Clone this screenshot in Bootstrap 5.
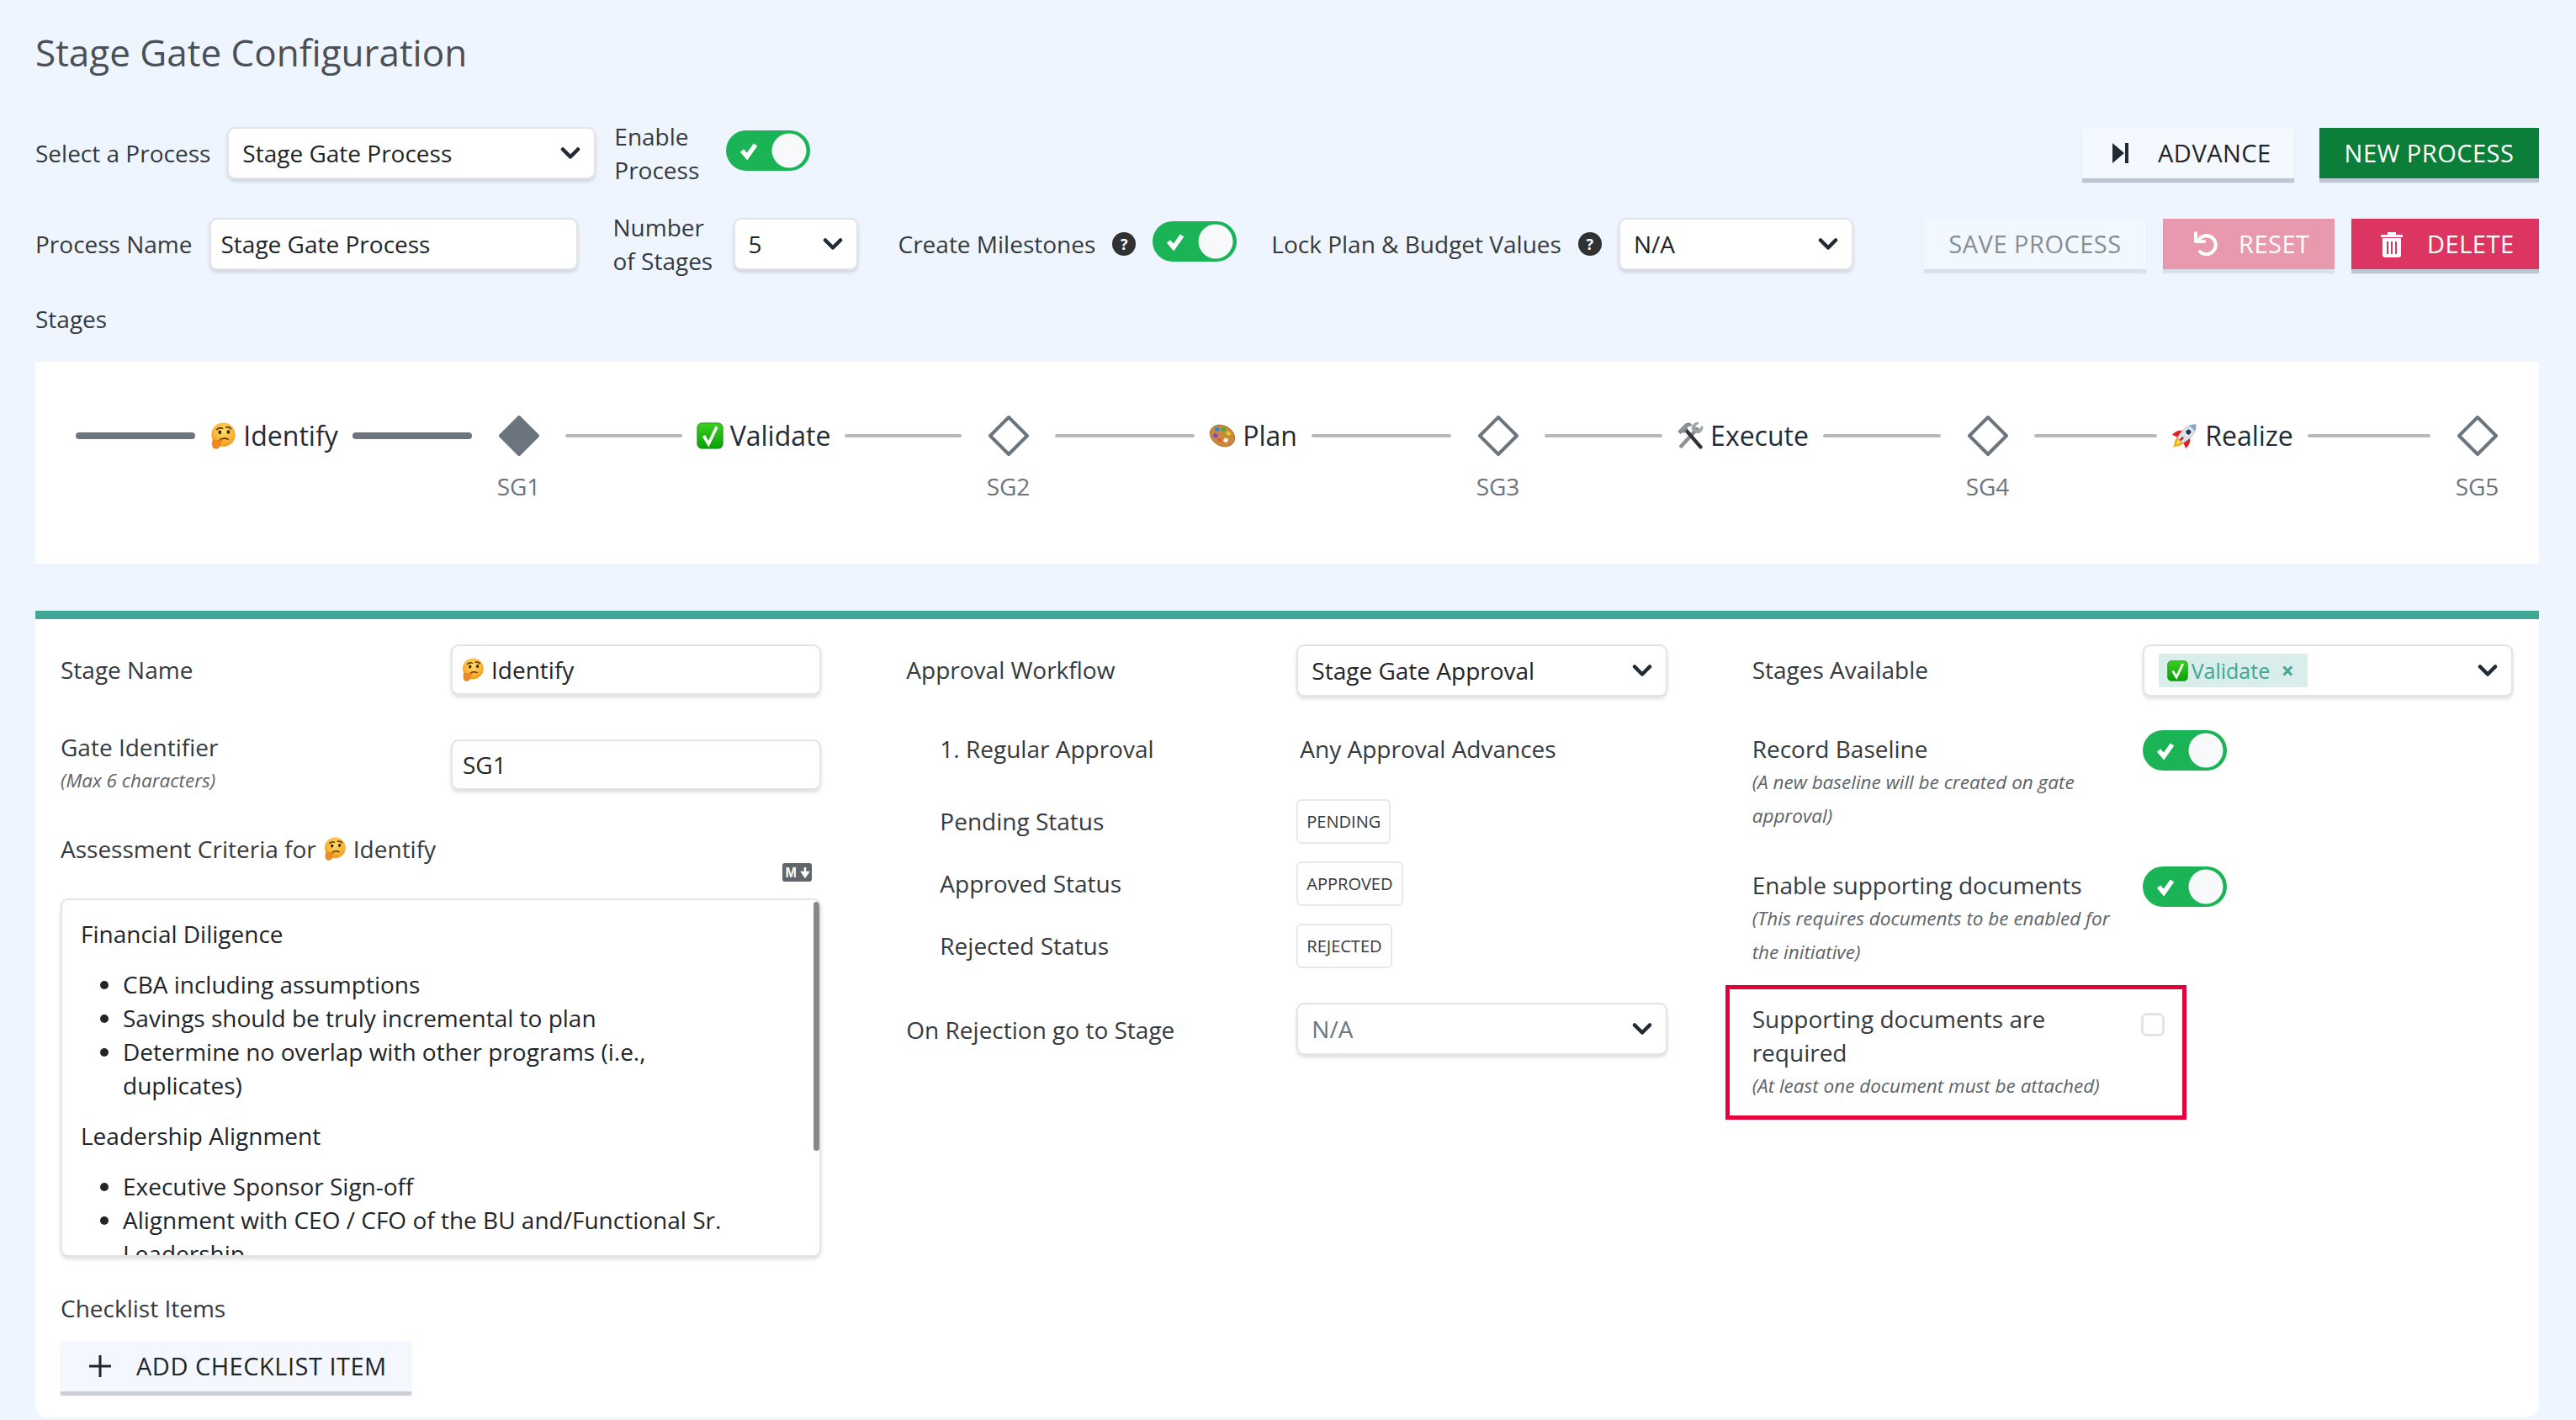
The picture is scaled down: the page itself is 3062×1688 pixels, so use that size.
<!doctype html>
<html lang="en">
<head>
<meta charset="utf-8">
<title>Stage Gate Configuration</title>
<link href="https://cdn.jsdelivr.net/npm/bootstrap@5.3.0/dist/css/bootstrap.min.css" rel="stylesheet">
<style>
  body { background: #eef5ff; font-family: "Open Sans", sans-serif; font-size: 28px; line-height: 40px; color: #343a40; padding: 0 44px 0 42px; }
  .page-title { font-size: 44px; line-height: 64px; font-weight: 400; color: #495057; margin: 0; padding-top: 30px; }
  .top-row { height: 63px; margin-top: 56px; }
  .top-row + .top-row { margin-top: 45px; }
  .wrap-label { line-height: 40px; flex: none; }
  .lbl-enable { width: 133px; margin-left: 22px; }
  .lbl-number { width: 143px; margin-left: 42px; }
  .w-sel1 { width: 438px; flex: none; }
  .w-sel2 { width: 148px; flex: none; }
  .w-sel3 { width: 279px; flex: none; }
  .top-row .tog { margin-bottom: 6px; }
  .lbl-milestone { margin-left: 48px; }
  .lbl-lock { margin-left: 41px; }
  .help-gap { margin: 0 20px; }

  .form-control, .form-select {
    font-size: 28px; line-height: 40px; height: 60px; padding: 8px 16px; color: #212529;
    border: 2px solid #e2e4e7; border-radius: 9px; box-shadow: 0 3px 4px rgba(0, 0, 0, .13);
    font-family: "Open Sans", sans-serif;
  }
  .form-select {
    height: 62px;
    background-image: url("data:image/svg+xml,%3csvg xmlns='http://www.w3.org/2000/svg' viewBox='0 0 16 16'%3e%3cpath fill='none' stroke='%23212b36' stroke-width='3' stroke-linecap='round' stroke-linejoin='round' d='M2 5l6 6 6-6'/%3e%3c/svg%3e");
    background-size: 24px 24px; background-position: right 16px center; padding-right: 48px;
  }
  .w-inp1 { width: 438px; flex: none; height: 62px; padding-left: 12px; }
  .val-muted { color: #6c757d; }
  .emoji-inline { width: 28px; height: 28px; flex: none; }

  .form-check-input.tog {
    width: 100px; height: 48px; margin-top: 0; margin-left: 0; border: 0; border-radius: 24px; flex: none; float: none;
    background-color: #1ab355; background-size: 100px 48px; background-position: 0 0;
    background-image: url("data:image/svg+xml,%3csvg xmlns='http://www.w3.org/2000/svg' viewBox='0 0 100 48'%3e%3ccircle cx='75' cy='24' r='20.5' fill='%23f8f9fa'/%3e%3cpath fill='none' stroke='%23fff' stroke-width='5.5' d='M19 24l6 7 10-14'/%3e%3c/svg%3e");
  }
  .help-dot { width: 28px; height: 28px; border-radius: 50%; background: #2f3133; color: #fff; font-size: 18px; line-height: 28px; font-weight: 700; text-align: center; flex: none; }

  .act-btn { height: 60px; border: 0; border-radius: 0; font-size: 29px; line-height: 40px; padding: 0; box-shadow: 0 5px 1px rgba(60, 70, 90, .27); letter-spacing: .5px; white-space: nowrap; }
  .act-ico { padding-left: 34px; }
  .ico-slot { width: 56px; flex: none; display: flex; }
  .act-light { background: #f4f8ff; color: #212529; }
  .act-green, .act-green:hover { background: #0b7f39; color: #fff; }
  .act-save, .act-save:disabled { background: #f2f8ff; color: #868e96; box-shadow: 0 5px 1px rgba(60, 70, 90, .12); opacity: 1; }
  .act-reset { background: #e899ae; color: #fff; box-shadow: 0 5px 1px rgba(60, 70, 90, .12); }
  .act-del { background: #dc3562; color: #fff; }
  .btn-advance { width: 252px; }
  .btn-new { width: 261px; }
  .btn-savep { width: 264px; }
  .btn-reset { width: 204px; }
  .btn-del { width: 223px; }
  .gap-top { gap: 30px; }
  .gap-low { gap: 20px; }

  .stages-lbl { margin: 38px 0 0; line-height: 40px; }
  .stage-panel { background: #fff; margin-top: 31px; height: 240px; padding: 63px 17px 0 48px; }
  .step-item { width: 582px; flex: none; }
  .step-seg { height: 50px; flex: 1; min-width: 0; }
  .step-line { height: 4px; background: #b8b8b8; border-radius: 2px; flex: 1; }
  .step-line.on { height: 8px; background: #6c757d; border-radius: 4px; }
  .step-name { font-size: 32px; line-height: 50px; margin: 0 17px; color: #212b36; white-space: nowrap; }
  .step-name svg { width: 32px; height: 32px; flex: none; }
  .step-gate { width: 111px; flex: none; color: #6c757d; font-size: 28px; line-height: 40px; }
  .gate-mark { width: 50px; height: 50px; display: block; margin-bottom: 15px; }

  .cfg-card { background: #fff; margin-top: 56px; border-top: 10px solid #3fa796; border-radius: 0 0 14px 14px; padding: 30px 31px 0 30px; height: 959px; }
  .cfg-cols { --bs-gutter-x: 101px; }
  .fld { display: grid; grid-template-columns: 464px 1fr; }
  .fld-label { padding-top: 10px; }
  .hint { font-size: 22.5px; line-height: 40px; font-style: italic; color: #5c636a; }
  .gate-row { margin-top: 42px; }
  .gate-input { margin-top: 11px; padding-left: 12px; }
  .stage-name-val { padding-left: 10px; padding-right: 10px; }
  .assess-row { margin-top: 41px; }
  .md-row { height: 22px; margin-top: -3px; padding-right: 11px; }
  .crit-box { height: 426px; margin-top: 20px; padding: 20px 90px 0 22px; overflow: hidden; border: 2px solid #e2e4e7; border-radius: 9px; box-shadow: 0 3px 4px rgba(0, 0, 0, .13); position: relative; background: #fff; color: #212529; }
  .crit-box p { margin: 0 0 20px; }
  .crit-box ul { margin: 0 0 20px; padding-left: 50px; }
  .crit-thumb { position: absolute; top: 2px; right: 0; width: 7px; height: 296px; background: #85888c; border-radius: 4px; }
  .check-lbl { margin-top: 41px; }
  .btn-add { width: 417px; margin-top: 19px; background: #f4f7fd; color: #212529; }

  .sub-lbl { padding-left: 40px; }
  .reg-row { margin-top: 42px; }
  .status-first { margin-top: 29px; }
  .status-pill { display: inline-block; font-size: 20px; line-height: 49px; padding: 0 10px; border: 2px solid #e6e8ec; border-radius: 6px; background: #fff; color: #343a40; height: 53px; }
  .status-line { height: 74px; }
  .reject-row { margin-top: 31px; }
  .reject-row .fld-label { padding-top: 12px; }
  .stage-tag { background: #d9eeea; color: #3fa796; height: 40px; width: 177px; padding: 0 10px; border-radius: 2px; font-size: 25px; line-height: 40px; }
  .stage-tag svg { width: 25px; height: 25px; flex: none; }
  .tag-x { color: #3fa796; font-weight: 700; font-size: 26px; margin-left: auto; padding-right: 6px; }
  .sel-multi { padding: 9px 48px 9px 17px; }
  .opt-row { margin-top: 42px; }
  .tog-up { margin-top: -2px; }

  .req-box { border: 5px solid #e4003a; width: 548px; height: 160px; margin: 19px 0 0 -32px; padding: 15px 0 0 27px; }
  .req-text { width: 462px; flex: none; }
  .req-check { width: 28px; height: 28px; border: 3px solid #e2e4e7; border-radius: 5px; margin: 13px 0 0 0; padding: 0; float: none; flex: none; }
</style>
</head>
<body>

<!-- shared emoji -->
<svg class="position-absolute" width="0" height="0" aria-hidden="true">
  <defs>
    <radialGradient id="faceFill" cx="50%" cy="35%" r="65%">
      <stop offset="0" stop-color="#ffe066"/><stop offset="1" stop-color="#f49b1c"/>
    </radialGradient>
    <linearGradient id="checkFill" x1="0" y1="0" x2="0" y2="1">
      <stop offset="0" stop-color="#3ccf1e"/><stop offset="1" stop-color="#0aa00a"/>
    </linearGradient>
    <symbol id="em-think" viewBox="2 0 33 35">
      <circle cx="19" cy="16" r="15.500" fill="url(#faceFill)"/>
      <path d="M10.500 9.500c2-2.200 5-2.700 7.500-1.500M22.500 6.500c2.500-.8 5 0 6.500 2" fill="none" stroke="#5a3410" stroke-width="1.800" stroke-linecap="round"/>
      <ellipse cx="14.500" cy="13" rx="2" ry="2.500" fill="#3b2408"/>
      <ellipse cx="25.500" cy="12.500" rx="2" ry="2.500" fill="#3b2408"/>
      <path d="M15 22.500c3-1.800 7-1.800 10-.5" fill="none" stroke="#5a3410" stroke-width="1.800" stroke-linecap="round"/>
      <path d="M5 24c2-2 4-1 5.500 0l6-1.500c1.500 0 1.500 2 .2 2.500l-2.700 1c1.500 1 1 5.500-1 7-2 1.500-5.500 1.500-7 0-1.500-2-1.500-6-1-9z" fill="#f08a1d" stroke="#c96a10" stroke-width=".6"/>
    </symbol>
    <symbol id="em-check" viewBox="0 0 36 36">
      <rect x="1" y="1" width="34" height="34" rx="6" fill="url(#checkFill)" stroke="#0a8a0a" stroke-width="1"/>
      <path d="M9.500 18l6.500 11 11-23" fill="none" stroke="#fff" stroke-width="4"/>
    </symbol>
    <symbol id="em-palette" viewBox="0 0 36 36">
      <g transform="rotate(30 18 18)">
        <ellipse cx="18" cy="18" rx="17.500" ry="13.500" fill="#c98a3c" stroke="#9a6424" stroke-width=".8"/>
        <circle cx="25" cy="21" r="3" fill="#f4efe6"/>
        <ellipse cx="7.500" cy="14" rx="3.200" ry="2.600" fill="#2f86dd"/>
        <ellipse cx="15" cy="10" rx="3.200" ry="2.500" fill="#3cb04a"/>
        <ellipse cx="23.500" cy="11" rx="3.200" ry="2.500" fill="#eec81e"/>
        <ellipse cx="10" cy="22.500" rx="3.200" ry="2.800" fill="#8a3fc4"/>
        <ellipse cx="18" cy="25" rx="2.800" ry="2.300" fill="#e9572b"/>
      </g>
    </symbol>
    <symbol id="em-tools" viewBox="0 0 36 36">
      <path d="M27 9L6 32" stroke="#8d9298" stroke-width="5" stroke-linecap="round"/>
      <path d="M34.500 5l-5 5-4-1-1-4 5-4.500C25 0 20 3 20.500 8c.3 4 5 7 9 6 3.500-1 6-5 5-9z" fill="#a4a9ae" stroke="#6e7378" stroke-width=".7"/>
      <path d="M12 10l20 23" stroke="#2f3237" stroke-width="5" stroke-linecap="round"/>
      <path d="M2 12L12 2c3-1.500 6-1 8 1l-1.500 2-2-.5-3.500 3.500.5 2.500-3.500 3.500-2.500-1-2.500 2.500z" fill="#8b9096" stroke="#5d6166" stroke-width=".7"/>
    </symbol>
    <symbol id="em-rocket" viewBox="0 0 36 36">
      <g transform="rotate(45 18 18)">
        <path d="M12 26c0 6 4 9 6 14 2-5 6-8 6-14z" fill="#f9a11b"/>
        <path d="M15 27c0 3 2 5 3 9 1-4 3-6 3-9z" fill="#ffe04a"/>
        <path d="M12 15c-4 2-7 6-7 14l8-3zM24 15c4 2 7 6 7 14l-8-3z" fill="#e02020"/>
        <path d="M18-3c6 5 7.500 12 7 20-.2 4-1 7-2 10H13c-1-3-1.800-6-2-10-.5-8 1-15 7-20z" fill="#dbe2ea" stroke="#8e9db0" stroke-width=".6"/>
        <path d="M18-3c2.500 2 4 4.500 5 7H13c1-2.500 2.500-5 5-7z" fill="#86a6d2"/>
        <circle cx="18" cy="11" r="4" fill="#1f3554" stroke="#eef2f6" stroke-width="1.400"/>
        <path d="M18 21v6" stroke="#d02020" stroke-width="3"/>
      </g>
    </symbol>
  </defs>
</svg>

<h1 class="page-title">Stage Gate Configuration</h1>

<div class="d-flex align-items-center top-row">
  <label class="me-3 pe-1">Select a Process</label>
  <select class="form-select w-sel1"><option>Stage Gate Process</option></select>
  <span class="wrap-label lbl-enable">Enable<br>Process</span>
  <input class="form-check-input tog" type="checkbox" role="switch" checked>
  <div class="d-flex gap-top ms-auto">
    <button class="btn act-btn act-ico act-light btn-advance d-flex align-items-center">
      <span class="ico-slot"><svg width="24" height="26" viewBox="0 0 24 26"><path d="M2 1l14 12L2 25z" fill="#212b36"/><rect x="17" y="1" width="4" height="24" fill="#212b36"/></svg></span>
      ADVANCE
    </button>
    <button class="btn act-btn act-green btn-new">NEW PROCESS</button>
  </div>
</div>

<div class="d-flex align-items-center top-row">
  <label class="me-3 pe-1">Process Name</label>
  <input class="form-control w-inp1" value="Stage Gate Process">
  <span class="wrap-label lbl-number">Number<br>of Stages</span>
  <select class="form-select w-sel2"><option>5</option></select>
  <span class="lbl-milestone text-nowrap">Create Milestones</span>
  <span class="help-dot help-gap">?</span>
  <input class="form-check-input tog" type="checkbox" role="switch" checked>
  <span class="lbl-lock text-nowrap">Lock Plan &amp; Budget Values</span>
  <span class="help-dot help-gap">?</span>
  <select class="form-select w-sel3"><option>N/A</option></select>
  <div class="d-flex gap-low ms-auto">
    <button class="btn act-btn act-save btn-savep" disabled>SAVE PROCESS</button>
    <button class="btn act-btn act-ico act-reset btn-reset d-flex align-items-center">
      <span class="ico-slot"><svg width="32" height="32" viewBox="0 0 32 32"><path d="M8 12a11 11 0 1 1 2 13" fill="none" stroke="#fff" stroke-width="4" stroke-linecap="round"/><path d="M5 3v10h10" fill="none" stroke="#fff" stroke-width="4" stroke-linecap="round" stroke-linejoin="round"/></svg></span>
      RESET
    </button>
    <button class="btn act-btn act-ico act-del btn-del d-flex align-items-center">
      <span class="ico-slot"><svg width="28" height="32" viewBox="0 0 28 32"><path d="M1 5h26v3H1zM9 2h10v3H9z" fill="#fff"/><path d="M3 9h22v20c0 2-1 3-3 3H6c-2 0-3-1-3-3z" fill="#fff"/><path d="M9 13v15M14 13v15M19 13v15" stroke="#dc3562" stroke-width="2"/></svg></span>
      DELETE
    </button>
  </div>
</div>

<p class="stages-lbl">Stages</p>

<div class="stage-panel d-flex">
  <div class="step-item d-flex align-items-start">
    <div class="step-seg d-flex align-items-center">
      <span class="step-line on"></span>
      <span class="step-name d-flex align-items-center gap-2"><svg><use href="#em-think"/></svg>Identify</span>
      <span class="step-line on"></span>
    </div>
    <div class="step-gate d-flex flex-column align-items-center">
      <svg class="gate-mark" viewBox="0 0 50 50"><path d="M25 3L47 25 25 47 3 25z" fill="#6c757d" stroke="#6c757d" stroke-width="4" stroke-linejoin="round"/></svg>
      SG1
    </div>
  </div>
  <div class="step-item d-flex align-items-start">
    <div class="step-seg d-flex align-items-center">
      <span class="step-line"></span>
      <span class="step-name d-flex align-items-center gap-2"><svg><use href="#em-check"/></svg>Validate</span>
      <span class="step-line"></span>
    </div>
    <div class="step-gate d-flex flex-column align-items-center">
      <svg class="gate-mark" viewBox="0 0 50 50"><path d="M25 3L47 25 25 47 3 25z" fill="#fff" stroke="#6c757d" stroke-width="4" stroke-linejoin="round"/></svg>
      SG2
    </div>
  </div>
  <div class="step-item d-flex align-items-start">
    <div class="step-seg d-flex align-items-center">
      <span class="step-line"></span>
      <span class="step-name d-flex align-items-center gap-2"><svg><use href="#em-palette"/></svg>Plan</span>
      <span class="step-line"></span>
    </div>
    <div class="step-gate d-flex flex-column align-items-center">
      <svg class="gate-mark" viewBox="0 0 50 50"><path d="M25 3L47 25 25 47 3 25z" fill="#fff" stroke="#6c757d" stroke-width="4" stroke-linejoin="round"/></svg>
      SG3
    </div>
  </div>
  <div class="step-item d-flex align-items-start">
    <div class="step-seg d-flex align-items-center">
      <span class="step-line"></span>
      <span class="step-name d-flex align-items-center gap-2"><svg><use href="#em-tools"/></svg>Execute</span>
      <span class="step-line"></span>
    </div>
    <div class="step-gate d-flex flex-column align-items-center">
      <svg class="gate-mark" viewBox="0 0 50 50"><path d="M25 3L47 25 25 47 3 25z" fill="#fff" stroke="#6c757d" stroke-width="4" stroke-linejoin="round"/></svg>
      SG4
    </div>
  </div>
  <div class="step-item d-flex align-items-start">
    <div class="step-seg d-flex align-items-center">
      <span class="step-line"></span>
      <span class="step-name d-flex align-items-center gap-2"><svg><use href="#em-rocket"/></svg>Realize</span>
      <span class="step-line"></span>
    </div>
    <div class="step-gate d-flex flex-column align-items-center">
      <svg class="gate-mark" viewBox="0 0 50 50"><path d="M25 3L47 25 25 47 3 25z" fill="#fff" stroke="#6c757d" stroke-width="4" stroke-linejoin="round"/></svg>
      SG5
    </div>
  </div>
</div>

<div class="cfg-card">
  <div class="row cfg-cols">
    <!-- left column -->
    <div class="col-4">
      <div class="fld">
        <div class="fld-label">Stage Name</div>
        <div class="form-control stage-name-val d-flex align-items-center gap-2"><svg class="emoji-inline"><use href="#em-think"/></svg>Identify</div>
      </div>
      <div class="fld gate-row">
        <div>
          <div>Gate Identifier</div>
          <div class="hint">(Max 6 characters)</div>
        </div>
        <input class="form-control gate-input" value="SG1">
      </div>
      <div class="d-flex align-items-center gap-2 assess-row">Assessment Criteria for <svg class="emoji-inline"><use href="#em-think"/></svg> Identify</div>
      <div class="d-flex justify-content-end md-row">
        <svg width="35" height="22" viewBox="0 0 35 22"><rect width="35" height="22" rx="3" fill="#60656b"/><text x="3.500" y="17" font-family="Liberation Sans, sans-serif" font-size="16" font-weight="700" fill="#fff">M</text><path d="M27 5v7M23.500 11l3.500 5 3.500-5z" stroke="#fff" stroke-width="2.500" fill="#fff"/></svg>
      </div>
      <div class="crit-box">
        <span class="crit-thumb"></span>
        <p>Financial Diligence</p>
        <ul>
          <li>CBA including assumptions</li>
          <li>Savings should be truly incremental to plan</li>
          <li>Determine no overlap with other programs (i.e., duplicates)</li>
        </ul>
        <p>Leadership Alignment</p>
        <ul>
          <li>Executive Sponsor Sign-off</li>
          <li>Alignment with CEO / CFO of the BU and/Functional Sr. Leadership</li>
        </ul>
      </div>
      <div class="check-lbl">Checklist Items</div>
      <button class="btn act-btn act-ico btn-add d-flex align-items-center">
        <span class="ico-slot"><svg width="26" height="26" viewBox="0 0 26 26"><path d="M13 0v26M0 13h26" stroke="#212529" stroke-width="3"/></svg></span>
        ADD CHECKLIST ITEM
      </button>
    </div>

    <!-- middle column -->
    <div class="col-4">
      <div class="fld">
        <div class="fld-label">Approval Workflow</div>
        <select class="form-select"><option>Stage Gate Approval</option></select>
      </div>
      <div class="fld reg-row">
        <div class="sub-lbl">1. Regular Approval</div>
        <div class="ps-1">Any Approval Advances</div>
      </div>
      <div class="fld status-line status-first align-items-center">
        <div class="sub-lbl">Pending Status</div>
        <div><span class="status-pill">PENDING</span></div>
      </div>
      <div class="fld status-line align-items-center">
        <div class="sub-lbl">Approved Status</div>
        <div><span class="status-pill">APPROVED</span></div>
      </div>
      <div class="fld status-line align-items-center">
        <div class="sub-lbl">Rejected Status</div>
        <div><span class="status-pill">REJECTED</span></div>
      </div>
      <div class="fld reject-row">
        <div class="fld-label">On Rejection go to Stage</div>
        <select class="form-select val-muted"><option>N/A</option></select>
      </div>
    </div>

    <!-- right column -->
    <div class="col-4">
      <div class="fld">
        <div class="fld-label">Stages Available</div>
        <div class="form-select d-flex align-items-center sel-multi">
          <span class="stage-tag d-flex align-items-center gap-1"><svg><use href="#em-check"/></svg>Validate<span class="tag-x">×</span></span>
        </div>
      </div>
      <div class="fld opt-row">
        <div>
          <div>Record Baseline</div>
          <div class="hint pe-4">(A new baseline will be created on gate approval)</div>
        </div>
        <div class="tog-up"><input class="form-check-input tog" type="checkbox" role="switch" checked></div>
      </div>
      <div class="fld opt-row">
        <div>
          <div>Enable supporting documents</div>
          <div class="hint pe-4">(This requires documents to be enabled for the initiative)</div>
        </div>
        <div class="tog-up"><input class="form-check-input tog" type="checkbox" role="switch" checked></div>
      </div>
      <div class="req-box d-flex">
        <div class="req-text">
          <div class="pe-5">Supporting documents are required</div>
          <div class="hint">(At least one document must be attached)</div>
        </div>
        <input class="form-check-input req-check" type="checkbox">
      </div>
    </div>
  </div>
</div>

<script src="https://cdn.jsdelivr.net/npm/bootstrap@5.3.0/dist/js/bootstrap.bundle.min.js"></script>
</body>
</html>
